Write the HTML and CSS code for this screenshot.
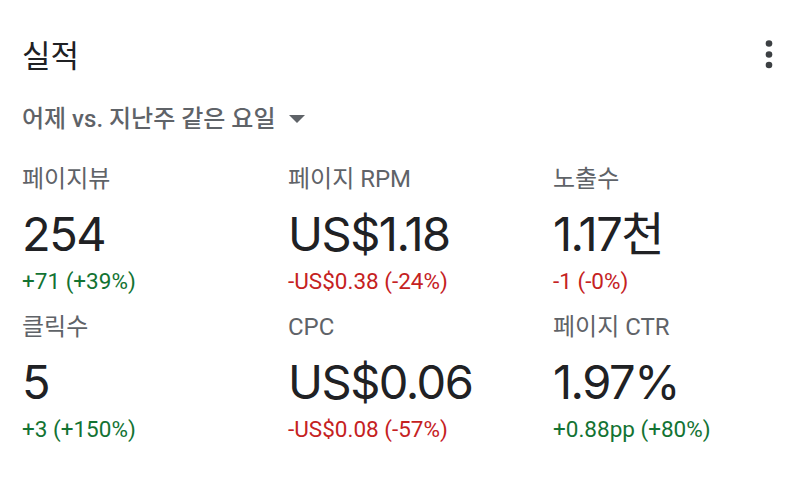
FILE: index.html
```html
<!DOCTYPE html>
<html lang="ko">
<head>
<meta charset="utf-8">
<link rel="stylesheet" href="styles.css">
</head>
<body>
<div class="card">
  <div class="header">
    <h1 class="title">실적</h1>
    <button class="more" aria-label="더보기">
      <svg width="8" height="29" viewBox="0 0 8 29"><circle cx="4" cy="3.5" r="3.3"/><circle cx="4" cy="14.5" r="3.3"/><circle cx="4" cy="25" r="3.3"/></svg>
    </button>
  </div>
  <div class="compare">어제 vs. 지난주 같은 요일 <span class="caret"></span></div>
  <div class="grid">
    <div class="metric">
      <div class="label">페이지뷰</div>
      <div class="value">254</div>
      <div class="delta up">+71 (+39%)</div>
    </div>
    <div class="metric">
      <div class="label">페이지 RPM</div>
      <div class="value">US$1.18</div>
      <div class="delta down">-US$0.38 (-24%)</div>
    </div>
    <div class="metric">
      <div class="label">노출수</div>
      <div class="value">1.17천</div>
      <div class="delta down">-1 (-0%)</div>
    </div>
    <div class="metric">
      <div class="label">클릭수</div>
      <div class="value">5</div>
      <div class="delta up">+3 (+150%)</div>
    </div>
    <div class="metric">
      <div class="label">CPC</div>
      <div class="value">US$0.06</div>
      <div class="delta down">-US$0.08 (-57%)</div>
    </div>
    <div class="metric">
      <div class="label">페이지 CTR</div>
      <div class="value">1.97%</div>
      <div class="delta up">+0.88pp (+80%)</div>
    </div>
  </div>
</div>
</body>
</html>
```
FILE: styles.css
```css
html, body {
  margin: 0;
  padding: 0;
  background: #ffffff;
}
body {
  font-family: Roboto, "Noto Sans CJK KR", sans-serif;
  color: #202124;
}
.card {
  padding: 34px 22px 0 22px;
}
.header {
  display: flex;
  justify-content: space-between;
  align-items: flex-start;
}
.title {
  margin: 0;
  font-family: "Noto Sans CJK KR", sans-serif;
  font-weight: 400;
  font-size: 31px;
  line-height: 40px;
  color: #202124;
}
.more {
  border: 0;
  background: none;
  padding: 0;
  margin: 6px 5px 0 0;
  fill: #3c4043;
  display: flex;
}
.compare {
  margin-top: 29px;
  font-family: Roboto, "Noto Sans CJK KR", sans-serif;
  font-weight: 500;
  font-size: 24px;
  line-height: 32px;
  color: #5f6368;
  display: flex;
  align-items: center;
  gap: 13px;
}
.caret {
  width: 0;
  height: 0;
  border-left: 8px solid transparent;
  border-right: 8px solid transparent;
  border-top: 8px solid #5f6368;
}
.grid {
  display: grid;
  grid-template-columns: 266px 265px 1fr;
  row-gap: 16px;
  margin-top: 29px;
}
.label {
  font-size: 24px;
  line-height: 30px;
  color: #5f6368;
}
.value {
  margin-top: 10px;
  font-family: Inter, "Noto Sans CJK KR", sans-serif;
  font-size: 47px;
  line-height: 60px;
  letter-spacing: -1.5px;
  color: #202124;
}
.delta {
  margin-top: 2px;
  font-size: 22.5px;
  line-height: 30px;
}
.up { color: #137333; }
.down { color: #c5221f; }
```
